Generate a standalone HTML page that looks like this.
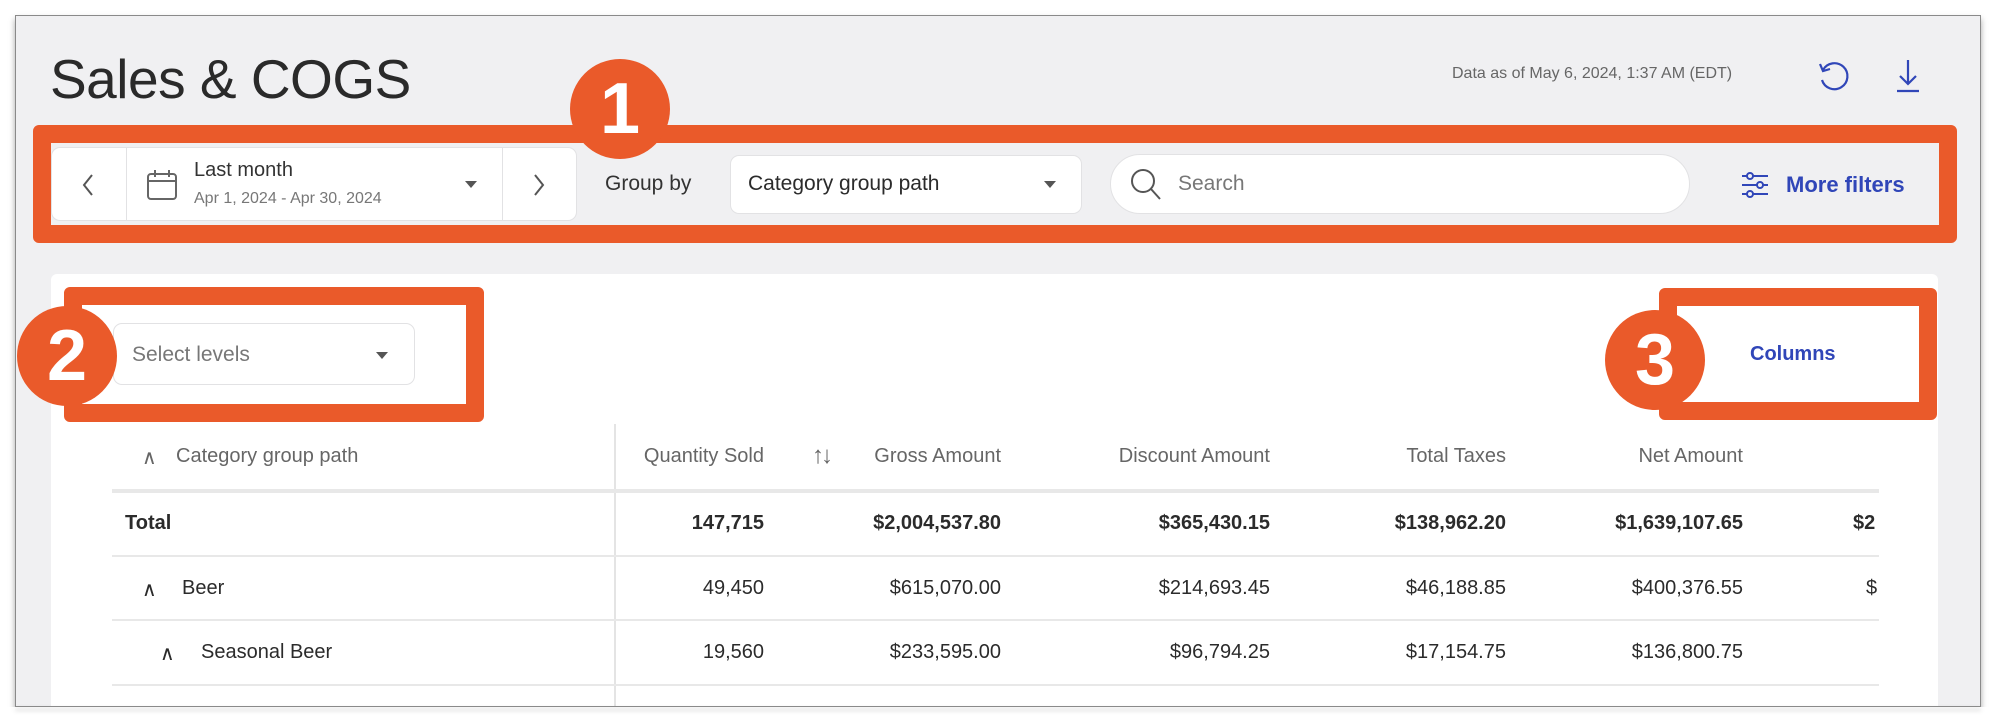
<!DOCTYPE html>
<html><head><meta charset="utf-8"><style>
*{box-sizing:border-box;margin:0;padding:0}
body{width:1996px;height:720px;background:#fff;position:relative;overflow:hidden;font-family:"Liberation Sans",sans-serif;color:#2b2b2b}
.a{position:absolute}
.frame{left:15px;top:15px;width:1966px;height:692px;background:#f0f0f2;border:1px solid #8a8a8a;box-shadow:0 4px 6px rgba(0,0,0,.35);overflow:hidden}
.card{left:51px;top:274px;width:1887px;height:432px;background:#fff;border-radius:6px 6px 0 0}
.ob{border:18px solid #ea5a2a;border-radius:6px}
.circ{width:100px;height:100px;border-radius:50%;background:#ea5a2a;color:#fff;font-weight:bold;font-size:72px;text-align:center;line-height:100px}
.ctl{background:#fff;border:1px solid #e2e2e4;border-radius:9px}
.th{font-size:20px;color:#666;top:445px}
.r{text-align:right}
.td{font-size:20px;color:#2b2b2b}
.hl{height:2px;background:#e8e8e8;left:112px;width:1767px}
</style></head><body>
<div class="a frame"></div>
<div class="a" style="left:50px;top:47px;font-size:55px;color:#2a2a2a;letter-spacing:-0.5px">Sales &amp; COGS</div>
<div class="a" style="left:1452px;top:65px;font-size:16px;color:#666">Data as of May 6, 2024, 1:37 AM (EDT)</div>
<svg class="a" style="left:1815px;top:58px" width="36" height="36" viewBox="0 0 36 36" fill="none" stroke="#3046b8" stroke-width="2.2"><path d="M8 12 A13 13 0 1 1 7 22"/><path d="M5 6 L8 13 L15 11"/></svg>
<svg class="a" style="left:1895px;top:56px" width="26" height="40" viewBox="0 0 26 40" fill="none" stroke="#3046b8" stroke-width="2.2"><path d="M13 4 V28 M5 20 L13 28 L21 20 M2 35 H24"/></svg>

<div class="a ctl" style="left:51px;top:147px;width:526px;height:74px"></div>
<div class="a" style="left:126px;top:148px;width:1px;height:72px;background:#e2e2e4"></div>
<div class="a" style="left:502px;top:148px;width:1px;height:72px;background:#e2e2e4"></div>
<svg class="a" style="left:80px;top:172px" width="16" height="26" viewBox="0 0 16 26" fill="none" stroke="#555" stroke-width="2"><path d="M12 3 L4 13 L12 23"/></svg>
<svg class="a" style="left:531px;top:172px" width="16" height="26" viewBox="0 0 16 26" fill="none" stroke="#555" stroke-width="2"><path d="M4 3 L12 13 L4 23"/></svg>
<svg class="a" style="left:146px;top:169px" width="32" height="32" viewBox="0 0 32 32" fill="none" stroke="#666" stroke-width="2"><rect x="2" y="5" width="28" height="25" rx="3"/><path d="M2 12 H30 M9 1 V8 M23 1 V8"/></svg>
<div class="a" style="left:194px;top:159px;font-size:20px;color:#333">Last month</div>
<div class="a" style="left:194px;top:190px;font-size:16px;color:#777">Apr 1, 2024 - Apr 30, 2024</div>
<div class="a" style="left:465px;top:181px;width:0;height:0;border-left:6px solid transparent;border-right:6px solid transparent;border-top:7px solid #555"></div>

<div class="a" style="left:605px;top:172px;font-size:21px;color:#333">Group by</div>
<div class="a ctl" style="left:730px;top:155px;width:352px;height:59px"></div>
<div class="a" style="left:748px;top:172px;font-size:21px;color:#2b2b2b">Category group path</div>
<div class="a" style="left:1044px;top:181px;width:0;height:0;border-left:6px solid transparent;border-right:6px solid transparent;border-top:7px solid #555"></div>
<div class="a ctl" style="left:1110px;top:154px;width:580px;height:60px;border-radius:30px"></div>
<svg class="a" style="left:1130px;top:168px" width="34" height="34" viewBox="0 0 34 34" fill="none" stroke="#555" stroke-width="2"><circle cx="13" cy="13" r="11"/><path d="M21 21 L30 31"/></svg>
<div class="a" style="left:1178px;top:172px;font-size:21px;color:#777">Search</div>
<svg class="a" style="left:1741px;top:171px" width="28" height="28" viewBox="0 0 28 28" fill="none" stroke="#3046b8" stroke-width="2"><path d="M1 5 H27 M1 14 H27 M1 23 H27"/><circle cx="9" cy="5" r="3" fill="#f0f0f2"/><circle cx="19" cy="14" r="3" fill="#f0f0f2"/><circle cx="9" cy="23" r="3" fill="#f0f0f2"/></svg>
<div class="a" style="left:1786px;top:172px;font-size:22px;color:#3046b8;font-weight:bold">More filters</div>

<div class="a ob" style="left:33px;top:125px;width:1924px;height:118px"></div>
<div class="a circ" style="left:570px;top:59px">1</div>

<div class="a card"></div>
<div class="a ctl" style="left:113px;top:323px;width:302px;height:62px"></div>
<div class="a" style="left:132px;top:343px;font-size:21px;color:#777">Select levels</div>
<div class="a" style="left:376px;top:352px;width:0;height:0;border-left:6px solid transparent;border-right:6px solid transparent;border-top:7px solid #555"></div>
<div class="a ob" style="left:64px;top:287px;width:420px;height:135px"></div>
<div class="a circ" style="left:17px;top:306px">2</div>
<div class="a" style="left:1750px;top:343px;font-size:20px;color:#3046b8;font-weight:bold">Columns</div>
<div class="a ob" style="left:1659px;top:288px;width:278px;height:132px"></div>
<div class="a circ" style="left:1605px;top:310px">3</div>

<div class="a" style="left:614px;top:424px;width:2px;height:282px;background:#e4e4e4"></div>
<div class="a hl" style="top:489px;height:4px"></div>
<div class="a hl" style="top:555px"></div>
<div class="a hl" style="top:619px"></div>
<div class="a hl" style="top:684px"></div>

<div class="a th" style="left:142px">&#x2227;</div>
<div class="a th" style="left:176px">Category group path</div>
<div class="a th r" style="left:564px;width:200px">Quantity Sold</div>
<div class="a th" style="left:812px;top:442px;font-size:24px;letter-spacing:-3px">↑↓</div>
<div class="a th r" style="left:801px;width:200px">Gross Amount</div>
<div class="a th r" style="left:1020px;width:250px">Discount Amount</div>
<div class="a th r" style="left:1256px;width:250px">Total Taxes</div>
<div class="a th r" style="left:1493px;width:250px">Net Amount</div>

<div class="a td" style="left:125px;top:512px;font-weight:bold">Total</div>
<div class="a td r" style="left:564px;top:512px;width:200px;font-weight:bold">147,715</div>
<div class="a td r" style="left:751px;top:512px;width:250px;font-weight:bold">$2,004,537.80</div>
<div class="a td r" style="left:1020px;top:512px;width:250px;font-weight:bold">$365,430.15</div>
<div class="a td r" style="left:1256px;top:512px;width:250px;font-weight:bold">$138,962.20</div>
<div class="a td r" style="left:1493px;top:512px;width:250px;font-weight:bold">$1,639,107.65</div>
<div class="a td" style="left:1853px;top:512px;font-weight:bold;width:26px;overflow:hidden">$2</div>

<div class="a td" style="left:142px;top:577px">&#x2227;</div>
<div class="a td" style="left:182px;top:577px">Beer</div>
<div class="a td r" style="left:564px;top:577px;width:200px">49,450</div>
<div class="a td r" style="left:751px;top:577px;width:250px">$615,070.00</div>
<div class="a td r" style="left:1020px;top:577px;width:250px">$214,693.45</div>
<div class="a td r" style="left:1256px;top:577px;width:250px">$46,188.85</div>
<div class="a td r" style="left:1493px;top:577px;width:250px">$400,376.55</div>
<div class="a td" style="left:1866px;top:577px;width:13px;overflow:hidden">$</div>

<div class="a td" style="left:160px;top:641px">&#x2227;</div>
<div class="a td" style="left:201px;top:641px">Seasonal Beer</div>
<div class="a td r" style="left:564px;top:641px;width:200px">19,560</div>
<div class="a td r" style="left:751px;top:641px;width:250px">$233,595.00</div>
<div class="a td r" style="left:1020px;top:641px;width:250px">$96,794.25</div>
<div class="a td r" style="left:1256px;top:641px;width:250px">$17,154.75</div>
<div class="a td r" style="left:1493px;top:641px;width:250px">$136,800.75</div>
<div class="a" style="left:0;top:707px;width:1996px;height:13px;background:#fff"></div>
<div class="a" style="left:15px;top:706px;width:1966px;height:1px;background:#8a8a8a;box-shadow:0 3px 5px rgba(0,0,0,.35)"></div>
</body></html>
